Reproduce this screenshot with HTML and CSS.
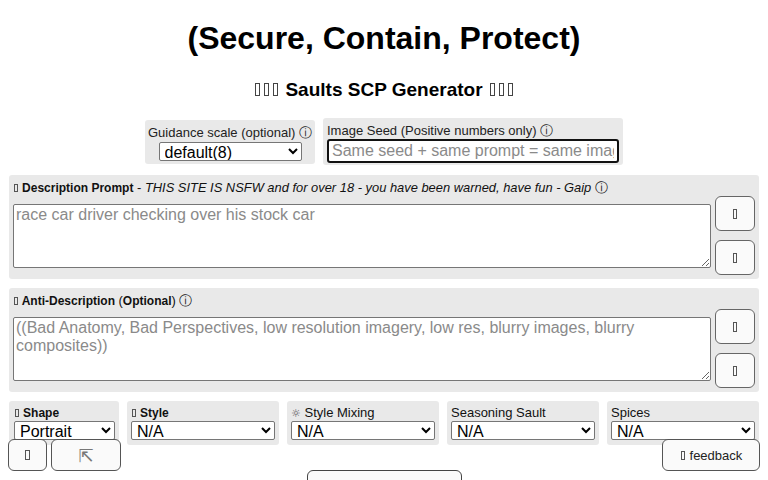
FILE: index.html
```html
<!DOCTYPE html>
<html>
<head>
<meta charset="utf-8">
<link rel="stylesheet" href="styles.css">
</head>
<body>
<h1 class="title">(Secure, Contain, Protect)</h1>
<h2 class="subtitle"><span class="tofu"></span><span class="tofu"></span><span class="tofu"></span> Saults SCP Generator <span class="tofu"></span><span class="tofu"></span><span class="tofu"></span></h2>

<div class="top-row">
  <div class="panel guidance">
    <label class="lbl">Guidance scale (optional) <span class="info">ⓘ</span></label>
    <select class="sel guide-sel"><option>default(8)</option></select>
  </div>
  <div class="panel seed">
    <label class="lbl">Image Seed (Positive numbers only) <span class="info">ⓘ</span></label>
    <input class="seed-input" type="text" placeholder="Same seed + same prompt = same image">
  </div>
</div>

<div class="panel prompt">
  <div class="plabel"><b><span class="tofu"></span> Description Prompt</b> - <i>THIS SITE IS NSFW and for over 18 - you have been warned, have fun - Gaip</i> <span class="info">ⓘ</span></div>
  <div class="prow">
    <textarea class="ta" placeholder="race car driver checking over his stock car"></textarea>
    <div class="btns">
      <button class="sq"><span class="tofu"></span></button>
      <button class="sq"><span class="tofu"></span></button>
    </div>
  </div>
</div>

<div class="panel prompt">
  <div class="plabel"><b><span class="tofu"></span> Anti-Description</b> (<b>Optional</b>) <span class="info">ⓘ</span></div>
  <div class="prow">
    <textarea class="ta" placeholder="((Bad Anatomy, Bad Perspectives, low resolution imagery, low res, blurry images, blurry composites))"></textarea>
    <div class="btns">
      <button class="sq"><span class="tofu"></span></button>
      <button class="sq"><span class="tofu"></span></button>
    </div>
  </div>
</div>

<div class="opts">
  <div class="panel opt shape">
    <label class="olbl"><b><span class="tofu"></span> Shape</b></label>
    <select class="sel"><option>Portrait</option></select>
  </div>
  <div class="panel opt">
    <label class="olbl"><b><span class="tofu"></span> Style</b></label>
    <select class="sel"><option>N/A</option></select>
  </div>
  <div class="panel opt">
    <label class="olbl"><span class="sun">☼</span> Style Mixing</label>
    <select class="sel"><option>N/A</option></select>
  </div>
  <div class="panel opt">
    <label class="olbl">Seasoning Sault</label>
    <select class="sel"><option>N/A</option></select>
  </div>
  <div class="panel opt">
    <label class="olbl">Spices</label>
    <select class="sel"><option>N/A</option></select>
  </div>
</div>

<div class="gen-wrap"><button class="gen"></button></div>

<div class="fixed-left">
  <button class="fb small"><span class="tofu"></span></button>
  <button class="fb wide">⇱</button>
</div>
<button class="fb feedback"><span class="tofu"></span> feedback</button>
</body>
</html>
```

FILE: styles.css
```css
html, body {
  margin: 0;
  padding: 0;
}
body {
  font-family: "Liberation Sans", Arial, sans-serif;
  color: #000;
  background: #fff;
  padding: 0 9px;
  overflow: hidden;
}
.tofu {
  display: inline-block;
  box-sizing: border-box;
  width: 0.3em;
  height: 0.68em;
  border: 1px solid #555;
  margin: 0 0.09em;
  vertical-align: baseline;
}
.title {
  font-size: 32px;
  line-height: 37px;
  font-weight: bold;
  text-align: center;
  margin: 20px 0 0;
}
.subtitle {
  font-size: 19px;
  line-height: 22px;
  height: 22px;
  font-weight: bold;
  text-align: center;
  margin: 22px 0 0;
}
.subtitle .tofu {
  border-color: #444;
}
.panel {
  background: #e9e9e9;
  border-radius: 3px;
  box-sizing: border-box;
}
.top-row {
  display: flex;
  justify-content: center;
  align-items: center;
  gap: 8px;
  margin-top: 17px;
}
.lbl {
  display: block;
  font-size: 13px;
  line-height: 18px;
  height: 18px;
  color: #222;
  white-space: nowrap;
}
.info {
  font-family: "DejaVu Sans", sans-serif;
  font-size: 13px;
}
.guidance {
  width: 170px;
  padding: 4px 2px 3px;
  text-align: center;
}
.sel {
  display: block;
  font-family: "Liberation Sans", Arial, sans-serif;
  font-size: 16px;
  height: 19px;
  padding: 0 0 0 1px;
  border: 1px solid #767676;
  border-radius: 2px;
  background: #fff;
  color: #000;
  box-sizing: border-box;
  width: 100%;
}
.guide-sel {
  width: 143px;
  margin: 0 auto;
}
.seed {
  width: 300px;
  padding: 4px 4px 2px;
}
.seed .lbl {
  line-height: 17px;
  height: 17px;
}
.seed-input {
  display: block;
  width: 100%;
  height: 24px;
  box-sizing: border-box;
  border: 2px solid #111;
  border-radius: 3px;
  font-family: "Liberation Sans", Arial, sans-serif;
  font-size: 16px;
  padding: 0 3px;
  outline: none;
}
.seed-input::placeholder {
  color: #8a8a8a;
}
.prompt {
  margin-top: 9px;
  padding: 4px;
}
.top-row + .prompt {
  margin-top: 10px;
}
.plabel {
  font-size: 12.9px;
  line-height: 17px;
  height: 17px;
  color: #111;
  white-space: nowrap;
}
.plabel b {
  font-size: 12px;
}
.plabel .info {
  font-size: 13px;
}
.prow {
  display: flex;
  align-items: center;
  gap: 4px;
}
.ta {
  flex: 1;
  height: 64px;
  box-sizing: border-box;
  border: 1px solid #767676;
  border-radius: 2px;
  font-family: "Liberation Sans", Arial, sans-serif;
  font-size: 16px;
  padding: 1px 2px;
  resize: vertical;
}
.ta::placeholder {
  color: #8a8a8a;
}
.btns {
  display: flex;
  flex-direction: column;
  gap: 9px;
}
.sq {
  width: 40px;
  height: 35px;
  border: 1px solid #666;
  border-radius: 6px;
  background: #fafafa;
  font-size: 14px;
  color: #333;
  padding: 0;
}
.opts {
  display: flex;
  gap: 8px;
  margin-top: 9px;
}
.opt {
  flex: 0 0 152px;
  padding: 4px 4px 5px;
}
.opt.shape {
  flex: 0 0 110px;
  padding-left: 5px;
  padding-right: 4px;
}
.shape .sel {
  width: 101px;
}
.olbl {
  display: block;
  font-size: 13px;
  line-height: 16px;
  height: 16px;
  color: #111;
  white-space: nowrap;
}
.olbl b {
  font-size: 12px;
}
.sun {
  font-family: "DejaVu Sans", sans-serif;
  font-size: 11px;
  color: #555;
}
.gen-wrap {
  display: flex;
  justify-content: center;
  margin-top: 25px;
}
.gen {
  width: 155px;
  height: 36px;
  border: 1px solid #444;
  border-radius: 6px;
  background: #fafafa;
}
.fb {
  height: 32px;
  border: 1px solid #555;
  border-radius: 6px;
  background: #fafafa;
  font-family: "Liberation Sans", Arial, sans-serif;
  font-size: 13px;
  color: #222;
  padding: 0;
}
.fixed-left {
  position: fixed;
  left: 8px;
  bottom: 9px;
  display: flex;
  gap: 4px;
}
.small {
  width: 39px;
  font-size: 14px;
}
.wide {
  width: 70px;
  font-size: 18px;
  color: #777;
  font-family: "DejaVu Sans", sans-serif;
}
.feedback {
  position: fixed;
  right: 8px;
  bottom: 9px;
  width: 98px;
}
```
